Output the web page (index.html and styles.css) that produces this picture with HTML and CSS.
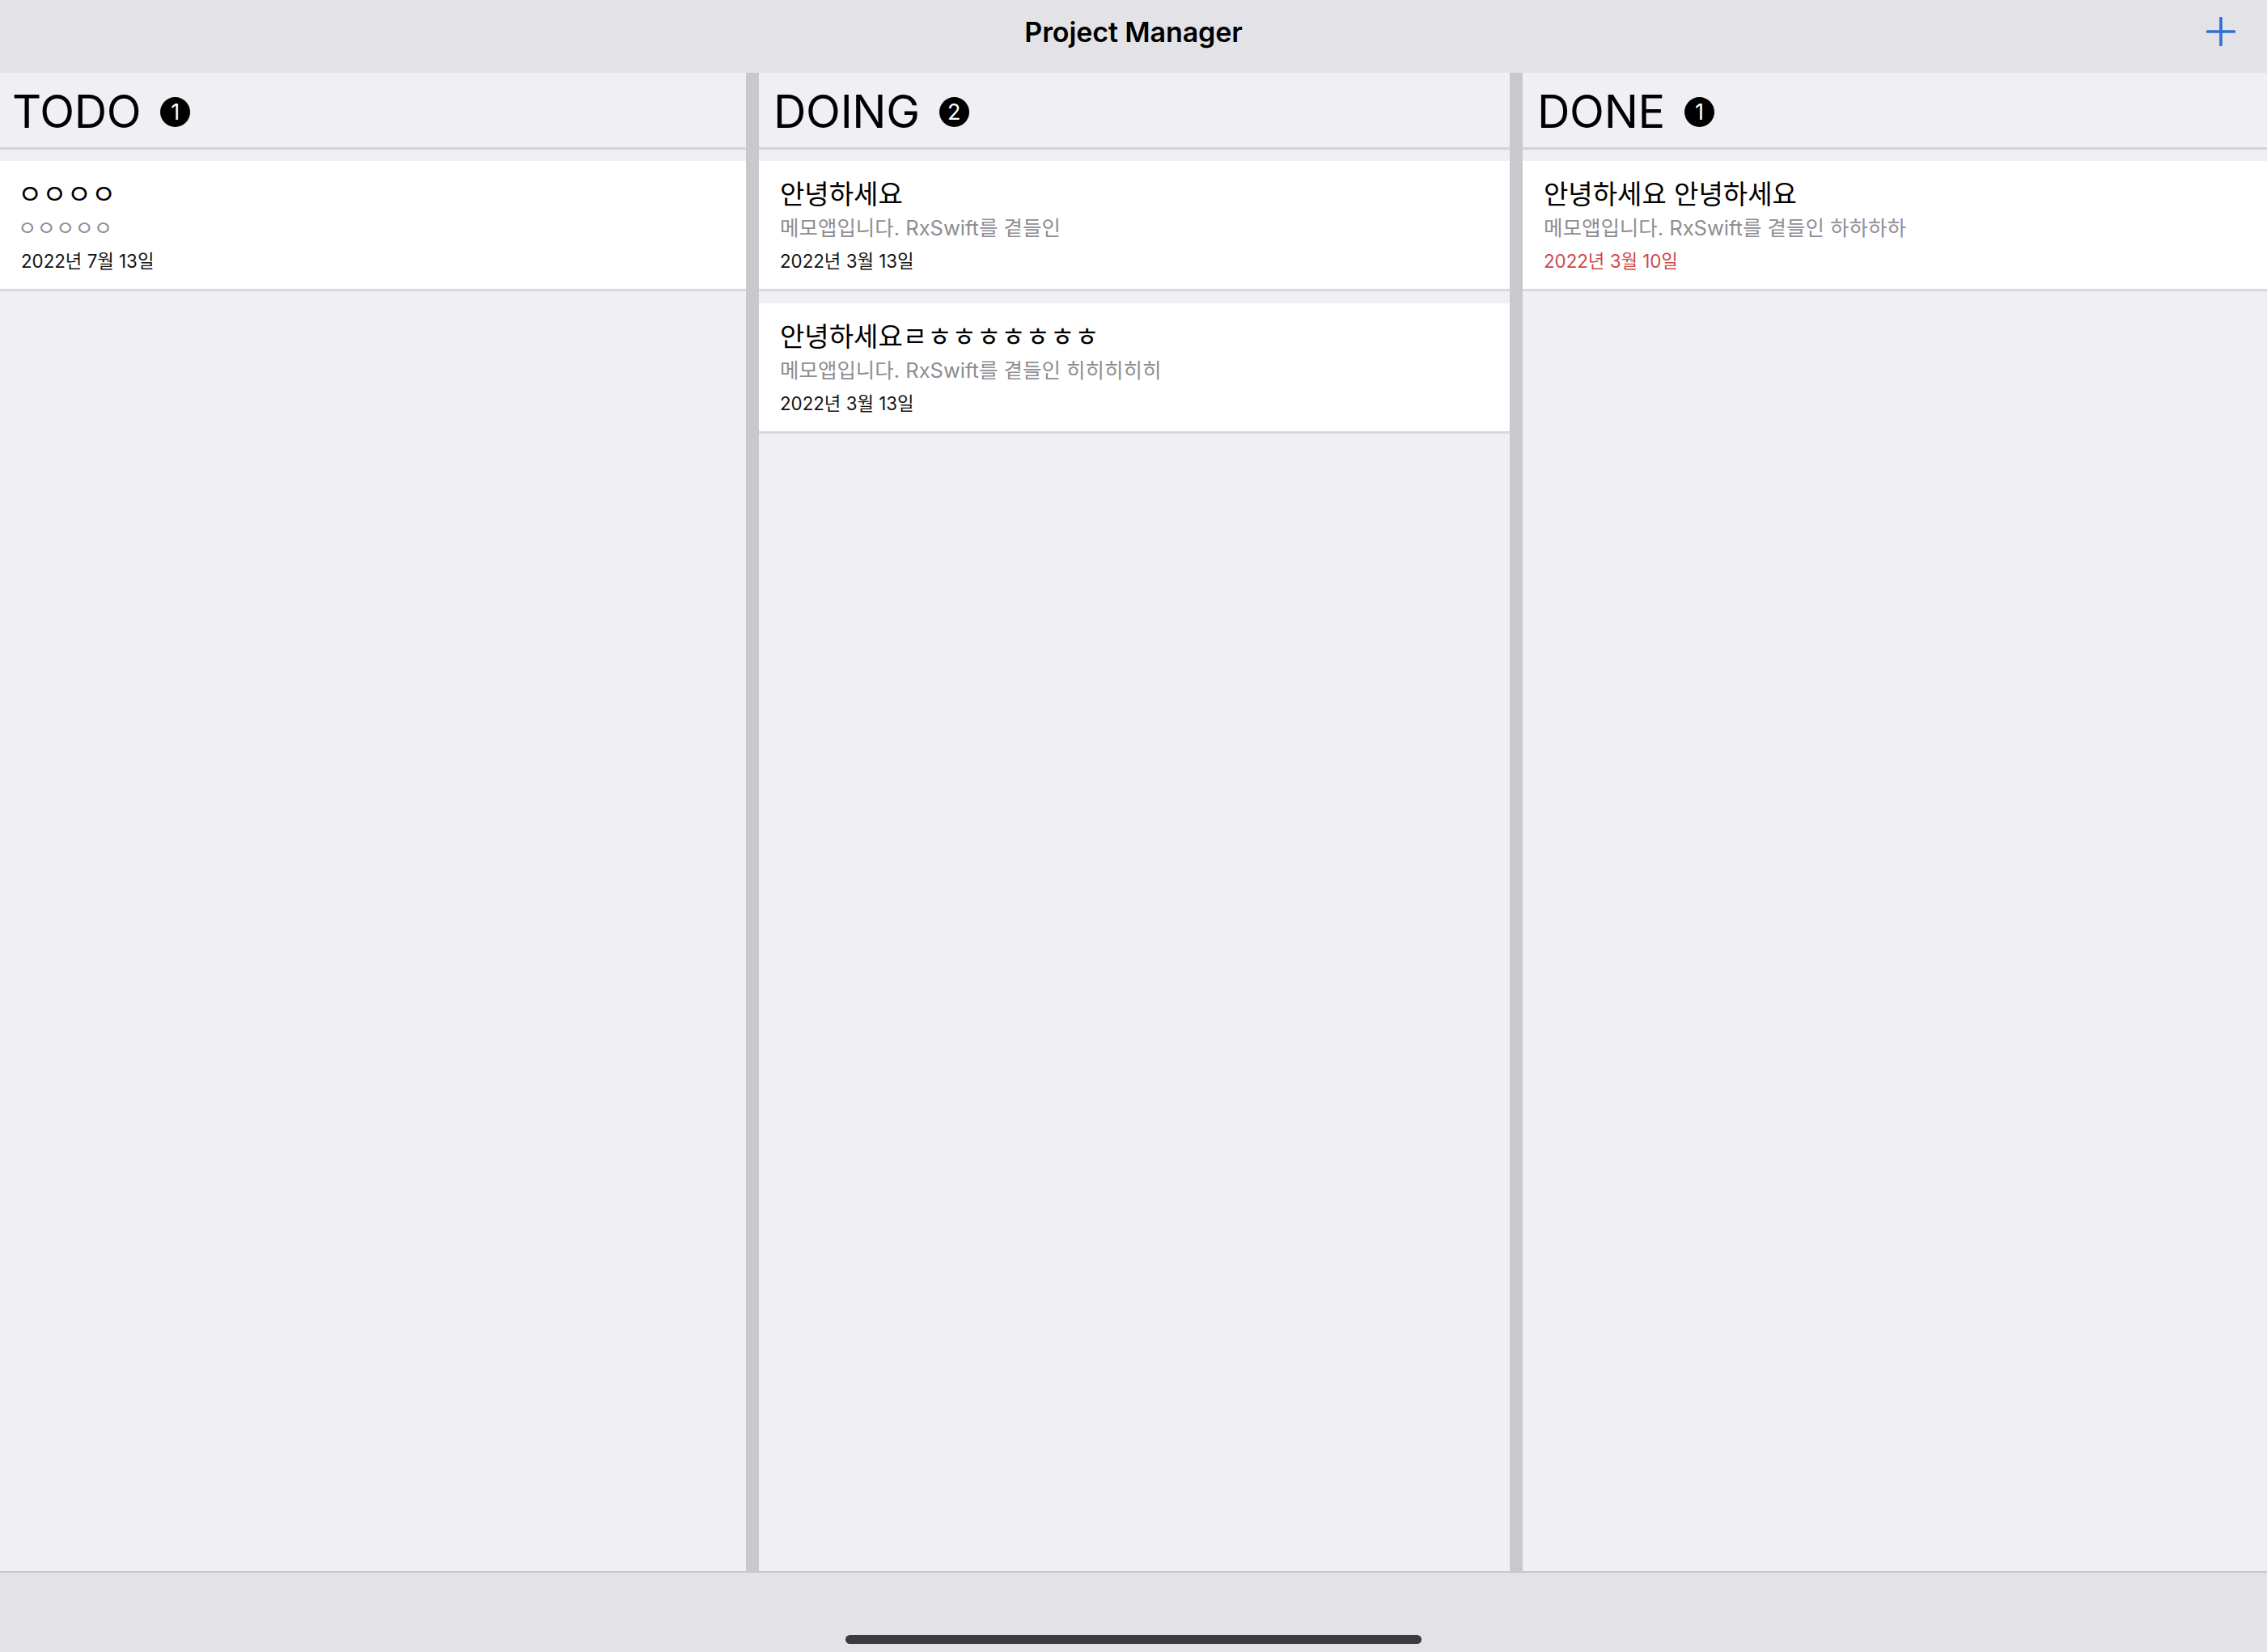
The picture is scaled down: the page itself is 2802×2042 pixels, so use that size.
FILE: index.html
```html
<!DOCTYPE html>
<html lang="ko">
<head>
<meta charset="utf-8">
<title>Project Manager</title>
<link rel="stylesheet" href="styles.css">
</head>
<body>
<div class="app">
  <header class="nav">
    <div class="nav-side"></div>
    <div class="nav-title">Project Manager</div>
    <div class="nav-side nav-right">
      <svg class="plus" viewBox="0 0 36 36" width="36" height="36" aria-label="추가">
        <path d="M18 1.5V34.5M1.5 18H34.5" stroke="#2f6fd8" stroke-width="3.6" stroke-linecap="round" fill="none"/>
      </svg>
    </div>
  </header>

  <main class="board">
    <section class="column">
      <div class="col-head">
        <span class="col-title">TODO</span>
        <span class="badge">1</span>
      </div>
      <div class="list">
        <article class="card">
          <div class="card-title jamo">ㅇㅇㅇㅇ</div>
          <div class="card-body jamo">ㅇㅇㅇㅇㅇ</div>
          <div class="card-date">2022년 7월 13일</div>
        </article>
      </div>
    </section>

    <section class="column">
      <div class="col-head">
        <span class="col-title">DOING</span>
        <span class="badge">2</span>
      </div>
      <div class="list">
        <article class="card">
          <div class="card-title">안녕하세요</div>
          <div class="card-body">메모앱입니다. RxSwift를 곁들인</div>
          <div class="card-date">2022년 3월 13일</div>
        </article>
        <article class="card">
          <div class="card-title">안녕하세요ㄹㅎㅎㅎㅎㅎㅎㅎ</div>
          <div class="card-body">메모앱입니다. RxSwift를 곁들인 히히히히히</div>
          <div class="card-date">2022년 3월 13일</div>
        </article>
      </div>
    </section>

    <section class="column">
      <div class="col-head">
        <span class="col-title">DONE</span>
        <span class="badge">1</span>
      </div>
      <div class="list">
        <article class="card">
          <div class="card-title">안녕하세요 안녕하세요</div>
          <div class="card-body">메모앱입니다. RxSwift를 곁들인 하하하하</div>
          <div class="card-date overdue">2022년 3월 10일</div>
        </article>
      </div>
    </section>
  </main>

  <footer class="home-area">
    <div class="home-indicator"></div>
  </footer>
</div>
</body>
</html>
```

FILE: styles.css
```css
* { box-sizing: border-box; }

html, body {
  margin: 0;
  padding: 0;
}

body {
  width: 2802px;
  height: 2042px;
  background: #e3e2e7;
  font-family: Inter, "Noto Sans CJK KR", "Noto Sans", sans-serif;
  color: #000;
  overflow: hidden;
}

.app {
  display: flex;
  flex-direction: column;
  height: 2042px;
}

/* Navigation bar */
.nav {
  height: 90px;
  flex: 0 0 90px;
  display: grid;
  grid-template-columns: 1fr auto 1fr;
  align-items: center;
  padding: 0 39px 12px 39px;
  background: #e3e2e7;
}

.nav-title {
  font-size: 34px;
  font-weight: 600;
  letter-spacing: -0.1px;
}

.nav-right {
  display: flex;
  justify-content: flex-end;
}

.plus { display: block; }

/* Board */
.board {
  flex: 0 0 1854px;
  display: grid;
  grid-template-columns: 922fr 928fr 920fr;
  column-gap: 16px;
  background: #c9c8cd;
  border-bottom: 2px solid #c6c6cb;
}

.column {
  background: #efeff4;
  display: flex;
  flex-direction: column;
}

.col-head {
  height: 95px;
  flex: 0 0 95px;
  display: flex;
  align-items: center;
  gap: 24px;
  padding: 4px 0 0 18px;
  border-bottom: 3px solid #d3d3d8;
}

.column:first-child .col-head {
  padding-left: 15px;
}

.col-title {
  font-size: 56px;
  font-weight: 400;
  letter-spacing: -0.3px;
  line-height: 1;
}

.badge {
  width: 37px;
  height: 37px;
  border-radius: 50%;
  background: #000;
  color: #fff;
  font-size: 27px;
  font-weight: 400;
  display: flex;
  align-items: center;
  justify-content: center;
  line-height: 1;
}

.list {
  padding-top: 14px;
  display: flex;
  flex-direction: column;
  gap: 15px;
}

.card {
  height: 161px;
  background: #fff;
  border-bottom: 3px solid #d8d8dc;
  padding: 21px 26px 0 26px;
  display: flex;
  flex-direction: column;
}

.card-title {
  font-size: 33px;
  line-height: 40px;
  color: #000;
  white-space: nowrap;
}

.card-body {
  font-size: 25.5px;
  line-height: 44px;
  color: #8e8e93;
  white-space: nowrap;
}

.card-title.jamo,
.card-body.jamo {
  margin-left: -4px;
}

.card-date {
  font-size: 22.3px;
  line-height: 38px;
  color: #111;
  white-space: nowrap;
}

.card-date.overdue {
  color: #cd4848;
}

/* Home indicator area */
.home-area {
  flex: 1 1 auto;
  display: flex;
  align-items: flex-end;
  justify-content: center;
  padding-bottom: 10px;
  background: #e3e2e7;
}

.home-indicator {
  width: 712px;
  height: 11px;
  border-radius: 6px;
  background: #3c3b41;
}
```
